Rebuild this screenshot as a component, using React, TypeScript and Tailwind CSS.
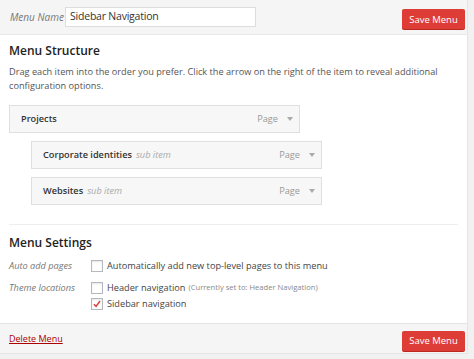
const items = [
  { title: 'Projects', sub: false },
  { title: 'Corporate identities', sub: true },
  { title: 'Websites', sub: true },
]

function Checkbox({ checked }: { checked?: boolean }) {
  return (
    <span className="flex h-[12px] w-[12px] shrink-0 items-center justify-center border border-[#b4b9be] bg-white shadow-[inset_0_1px_2px_rgba(0,0,0,0.1)]">
      {checked && (
        <svg viewBox="0 0 12 12" className="h-[10px] w-[10px]">
          <path d="M2.3 6.2 L4.9 8.9 L9.6 2.4" fill="none" stroke="#d9403a" strokeWidth="1.8" />
        </svg>
      )}
    </span>
  )
}

function SaveButton() {
  return (
    <button className="h-[20px] w-[63px] rounded-[2px] bg-[#dd3d36] text-[9.5px] leading-none text-white shadow-[0_1px_0_#ba281e]">
      Save Menu
    </button>
  )
}

function Arrow() {
  return (
    <svg viewBox="0 0 6 4" className="ml-[9px] h-[4px] w-[6px]">
      <path d="M0 0 H6 L3 4 Z" fill="#aaa" />
    </svg>
  )
}

export default function App() {
  return (
    <div className="h-[359px] w-[474px] overflow-hidden bg-[#f1f1f1] font-['Open_Sans',sans-serif] text-[#444]">
      <div className="w-[468px] border-r border-b border-[#e5e5e5]">
        <div className="flex h-[35px] items-center border-b border-[#e8e8e8] bg-[#f5f5f5] pl-[10px] pr-[2px]">
          <span className="w-[55px] text-[10px] italic text-[#777]">Menu Name</span>
          <div className="flex h-[20px] w-[191px] items-center border border-[#ddd] bg-white px-[4px] text-[10.5px] tracking-[-0.02em] text-[#333]">
            Sidebar Navigation
          </div>
          <div className="ml-auto">
            <SaveButton />
          </div>
        </div>

        <div className="h-[288px] bg-white px-[9px] pt-[8px]">
          <h3 className="text-[12px] leading-[16px] font-semibold text-[#222]">Menu Structure</h3>
          <p className="mt-[6px] text-[9.2px] leading-[14px] text-[#555]">
            Drag each item into the order you prefer. Click the arrow on the right of the item to reveal additional configuration options.
          </p>

          <div className="mt-[12px] flex flex-col gap-[8px]">
            {items.map((item) => (
              <div
                key={item.title}
                className={`flex h-[28px] w-[291px] items-center border border-[#dfdfdf] bg-[#f7f7f7] pl-[11px] pr-[6px] text-[9.2px] ${item.sub ? 'ml-[22px]' : ''}`}
              >
                <span className="font-semibold text-[#333]">{item.title}</span>
                {item.sub && <span className="ml-[4px] italic text-[#aaa]">sub item</span>}
                <span className="ml-auto text-[#999]">Page</span>
                <Arrow />
              </div>
            ))}
          </div>

          <div className="mt-[19px] border-t border-[#eee] pt-[10px]">
            <h3 className="text-[12px] leading-[16px] font-semibold text-[#222]">Menu Settings</h3>
            <div className="mt-[8px] flex h-[14px] items-center text-[9.2px]">
              <span className="w-[82px] italic text-[#777]">Auto add pages</span>
              <Checkbox />
              <span className="ml-[4px] text-[#444]">Automatically add new top-level pages to this menu</span>
            </div>
            <div className="mt-[8px] flex">
              <span className="w-[82px] text-[9.2px] leading-[14px] italic text-[#777]">Theme locations</span>
              <div className="flex flex-col gap-[2px] text-[9.2px]">
                <div className="flex h-[14px] items-center">
                  <Checkbox />
                  <span className="ml-[4px] text-[#444]">Header navigation</span>
                  <span className="ml-[3px] text-[7.6px] text-[#888]">(Currently set to: Header Navigation)</span>
                </div>
                <div className="flex h-[14px] items-center">
                  <Checkbox checked />
                  <span className="ml-[4px] text-[#444]">Sidebar navigation</span>
                </div>
              </div>
            </div>
          </div>
        </div>

        <div className="flex h-[30px] items-center border-t border-[#e5e5e5] bg-[#f5f5f5] pl-[9px] pr-[2px]">
          <a href="#" className="text-[9px] text-[#a00] underline">Delete Menu</a>
          <div className="ml-auto">
            <SaveButton />
          </div>
        </div>
      </div>
    </div>
  )
}
